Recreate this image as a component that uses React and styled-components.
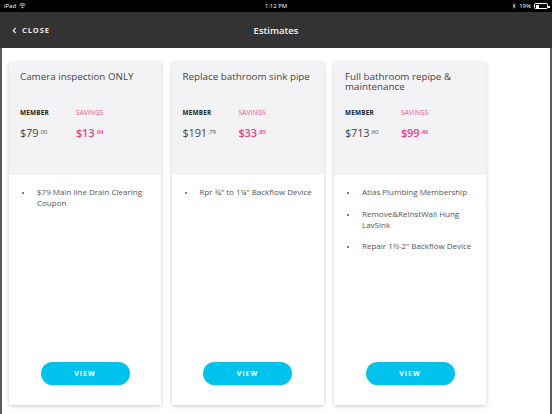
import React from 'react'
import styled, { createGlobalStyle } from 'styled-components'

const GlobalStyle = createGlobalStyle`
  html, body {
    margin: 0;
    padding: 0;
    background: #ffffff;
    font-family: "Open Sans", "Liberation Sans", sans-serif;
  }
  * { box-sizing: border-box; }
`

const estimates = [
  {
    title: 'Camera inspection ONLY',
    member: ['79', '00'],
    savings: ['13', '94'],
    items: ['$79 Main line Drain Clearing Coupon'],
  },
  {
    title: 'Replace bathroom sink pipe',
    member: ['191', '79'],
    savings: ['33', '85'],
    items: ['Rpr ¾" to 1¼" Backflow Device'],
  },
  {
    title: 'Full bathroom repipe & maintenance',
    member: ['713', '60'],
    savings: ['99', '46'],
    items: ['Atlas Plumbing Membership', 'Remove&ReInstWall Hung LavSink', 'Repair 1½-2" Backflow Device'],
  },
]

const Screen = styled.div`
  width: 552px;
  height: 414px;
  display: flex;
  flex-direction: column;
  overflow: hidden;
`

const StatusBar = styled.div`
  height: 12px;
  background: #000;
  color: #fff;
  font-size: 6px;
  display: grid;
  grid-template-columns: 1fr auto 1fr;
  align-items: center;
  padding: 0 4px;
`

const StatusLeft = styled.div`
  display: flex;
  align-items: center;
  gap: 3px;
`

const StatusRight = styled.div`
  display: flex;
  align-items: center;
  justify-content: flex-end;
  gap: 3px;
`

const Battery = styled.div`
  width: 14px;
  height: 6px;
  border: 0.8px solid #fff;
  border-radius: 1.5px;
  position: relative;
  &::before {
    content: '';
    position: absolute;
    left: 0.5px;
    top: 0.5px;
    bottom: 0.5px;
    width: 3px;
    background: #fff;
  }
  &::after {
    content: '';
    position: absolute;
    right: -2.5px;
    top: 1.5px;
    width: 1.2px;
    height: 2px;
    background: #fff;
  }
`

const NavBar = styled.div`
  height: 36px;
  background: #333333;
  color: #fff;
  display: grid;
  grid-template-columns: 1fr auto 1fr;
  align-items: center;
  padding: 0 12px;
`

const Close = styled.div`
  display: flex;
  align-items: center;
  gap: 5px;
  font-size: 7.5px;
  font-weight: 700;
  letter-spacing: 0.9px;
  color: #e8e8e8;
`

const NavTitle = styled.div`
  font-size: 9.5px;
  font-weight: 600;
  color: #f2f2f2;
`

const Content = styled.div`
  flex: 1;
  border-left: 2px solid #5c5c5c;
  border-right: 2px solid #5c5c5c;
  padding: 14px 0 0 7px;
  display: flex;
  gap: 10.5px;
  align-items: flex-start;
`

const Card = styled.div`
  width: 152px;
  height: 343px;
  background: #fff;
  box-shadow: 0 1px 4px rgba(0, 0, 0, 0.22);
  display: flex;
  flex-direction: column;
`

const CardTop = styled.div`
  height: 113px;
  flex-shrink: 0;
  background: #f3f3f5;
  padding: 10px 11px 0;
  display: flex;
  flex-direction: column;
`

const CardTitle = styled.div`
  font-size: 9.8px;
  line-height: 10px;
  color: #444;
  height: 28px;
`

const PriceGrid = styled.div`
  display: grid;
  grid-template-columns: 56px 1fr;
  row-gap: 8px;
  margin-top: 8px;
`

const Label = styled.div`
  font-size: 6.4px;
  letter-spacing: 0.2px;
  color: ${({ $pink }) => ($pink ? '#ea4c8d' : '#222')};
  font-weight: ${({ $pink }) => ($pink ? 500 : 700)};
`

const Price = styled.div`
  font-size: 11px;
  color: ${({ $pink }) => ($pink ? '#ea3f86' : '#444')};
  font-weight: ${({ $pink }) => ($pink ? 600 : 500)};
  letter-spacing: -0.2px;
  sup {
    font-size: 6px;
    vertical-align: 3px;
    margin-left: 1px;
    font-weight: ${({ $pink }) => ($pink ? 600 : 400)};
  }
`

const List = styled.ul`
  margin: 0;
  padding: 11px 10px 0 24px;
  list-style: disc;
  color: #555;
  font-size: 8px;
  line-height: 11px;
  li {
    margin-bottom: 10.5px;
    padding-left: 4px;
  }
  li::marker {
    font-size: 6px;
  }
`

const Footer = styled.div`
  margin-top: auto;
  display: flex;
  justify-content: center;
  padding-bottom: 20px;
`

const ViewButton = styled.button`
  width: 89px;
  height: 23px;
  border: none;
  border-radius: 12px;
  background: #00c3ed;
  color: #fff;
  font-family: inherit;
  font-size: 7px;
  font-weight: 700;
  letter-spacing: 1px;
`

const Amount = ({ value, pink }) => (
  <Price $pink={pink}>
    ${value[0]}
    <sup>.{value[1]}</sup>
  </Price>
)

export default function App() {
  return (
    <Screen>
      <GlobalStyle />
      <StatusBar>
        <StatusLeft>
          iPad
          <svg width="7" height="6" viewBox="0 0 14 11">
            <path d="M7 10.5 L9 8 A3 3 0 0 0 5 8 Z" fill="#fff" />
            <path d="M2.8 5.8 A6 6 0 0 1 11.2 5.8" stroke="#fff" strokeWidth="1.6" fill="none" />
            <path d="M0.7 3.3 A9 9 0 0 1 13.3 3.3" stroke="#fff" strokeWidth="1.6" fill="none" />
          </svg>
        </StatusLeft>
        <div>1:12 PM</div>
        <StatusRight>
          <svg width="4" height="6" viewBox="0 0 6 10">
            <path d="M1 3 L5 7 L3 9 V1 L5 3 L1 7" stroke="#fff" strokeWidth="0.9" fill="none" />
          </svg>
          19%
          <Battery />
        </StatusRight>
      </StatusBar>
      <NavBar>
        <Close>
          <svg width="5" height="7" viewBox="0 0 5 8">
            <path d="M4 1 L1 4 L4 7" stroke="#e8e8e8" strokeWidth="1.4" fill="none" />
          </svg>
          CLOSE
        </Close>
        <NavTitle>Estimates</NavTitle>
        <div />
      </NavBar>
      <Content>
        {estimates.map((e, i) => (
          <Card key={i}>
            <CardTop>
              <CardTitle>{e.title}</CardTitle>
              <PriceGrid>
                <Label>MEMBER</Label>
                <Label $pink>SAVINGS</Label>
                <Amount value={e.member} />
                <Amount value={e.savings} pink />
              </PriceGrid>
            </CardTop>
            <List>
              {e.items.map((it, j) => (
                <li key={j}>{it}</li>
              ))}
            </List>
            <Footer>
              <ViewButton>VIEW</ViewButton>
            </Footer>
          </Card>
        ))}
      </Content>
    </Screen>
  )
}
